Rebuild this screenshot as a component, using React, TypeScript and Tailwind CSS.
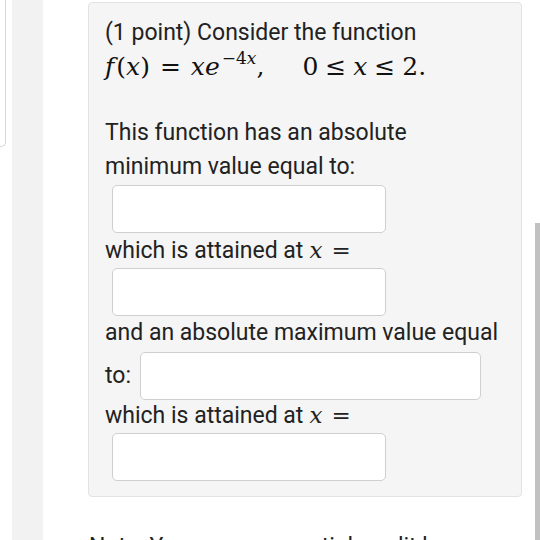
import React from "react";

const serif = "font-['DejaVu_Serif','Liberation_Serif',serif]";

function Answer({ wide }: { wide?: boolean }) {
  return (
    <div
      className={`h-[48px] rounded-[5px] border border-[#cfcfcf] bg-white ${wide ? "w-[341px]" : "w-[274px]"}`}
    />
  );
}

function Attained() {
  return (
    <div className="flex h-[34px] items-baseline">
      <span>which is attained at</span>
      <span className={`${serif} ml-[6px] text-[23px] italic leading-[34px]`}>x</span>
      <span className={`${serif} ml-[9px] text-[23px] leading-[34px]`}>=</span>
    </div>
  );
}

export default function App() {
  return (
    <div className="relative h-[540px] w-[540px] overflow-hidden bg-white font-['Roboto','Liberation_Sans',sans-serif] text-[23px] leading-[34px] text-[#222]">
      <div className="flex">
        <div className="w-[12px] shrink-0">
          <div className="h-[147px] w-[6px] rounded-br-[5px] border-r border-b border-[#d6d6d6] bg-white" />
        </div>
        <div className="h-[540px] w-[31px] shrink-0 bg-[#f2f2f2]" />
        <div className="w-[45px] shrink-0" />
        <div className="w-[434px] shrink-0 pt-[2px]">
          <div className="rounded-[4px] border border-[#e3e3e3] bg-[#f5f5f5] pb-[15px] pl-[16px] pr-[8px] pt-[13px]">
            <div className="whitespace-nowrap">(1 point) Consider the function</div>
            <div className={`${serif} flex h-[34px] items-baseline text-[25px] leading-[34px] text-[#111]`}>
              <span className="italic">f</span>
              <span className="ml-[2px]">(</span>
              <span className="italic">x</span>
              <span>)</span>
              <span className="ml-[10px] mr-[10px]">=</span>
              <span className="italic">xe</span>
              <span className="relative -top-[11px] ml-[2px] text-[17px] italic leading-none">
                <span className="not-italic">−4</span>x
              </span>
              <span>,</span>
              <span className="ml-[38px]">0</span>
              <span className="mx-[7px]">≤</span>
              <span className="italic">x</span>
              <span className="mx-[7px]">≤</span>
              <span>2.</span>
            </div>
            <div className="mt-[32px] whitespace-nowrap">This function has an absolute</div>
            <div>minimum value equal to:</div>
            <div className="ml-[7px] mt-[1px]">
              <Answer />
            </div>
            <Attained />
            <div className="ml-[7px] mt-[1px]">
              <Answer />
            </div>
            <div className="whitespace-nowrap">and an absolute maximum value equal</div>
            <div className="mt-[2px] flex items-center">
              <span>to:</span>
              <div className="ml-[9px]">
                <Answer wide />
              </div>
            </div>
            <div className="-mt-[2px]">
              <Attained />
            </div>
            <div className="ml-[7px] mt-[1px]">
              <Answer />
            </div>
          </div>
          <div className="mt-[33px] whitespace-nowrap pl-[1px]">Note: You can earn partial credit here.</div>
        </div>
      </div>
      <div className="absolute right-0 top-[223px] h-[317px] w-[5px] bg-[#c1c1c1]" />
    </div>
  );
}
